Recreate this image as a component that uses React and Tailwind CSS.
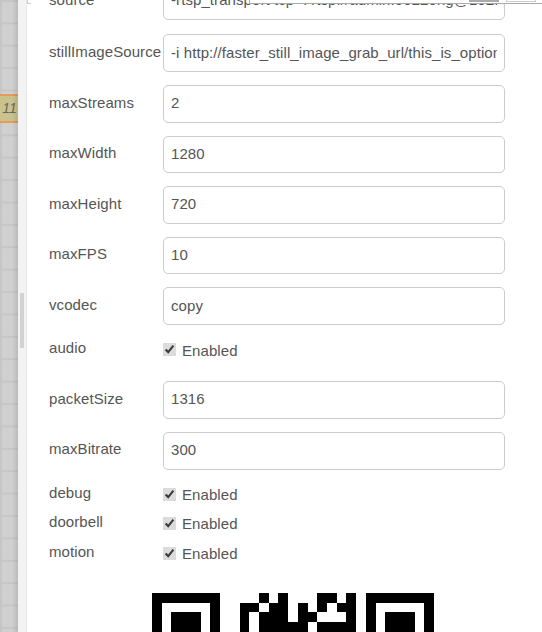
const stream = [
    ['stillImageSource', '-i http://faster_still_image_grab_url/this_is_optional.jpg'],
    ['maxStreams', '2'],
    ['maxWidth', '1280'],
    ['maxHeight', '720'],
    ['maxFPS', '10'],
    ['vcodec', 'copy'],
]

// visible rows of the qr code, [row, first col, last col]
const qrCells = [
    [0, 11, 11], [0, 13, 13], [0, 17, 18], [0, 20, 20],
    [1, 9, 10], [1, 12, 13], [1, 15, 15], [1, 17, 17], [1, 19, 20],
    [2, 9, 9], [2, 11, 13], [2, 15, 16], [2, 20, 20],
    [3, 9, 9], [3, 11, 15], [3, 17, 20],
    [4, 8, 9], [4, 11, 11], [4, 14, 20],
]

const QrCode = () => (
    <svg width="282" height="40" viewBox="0 0 29 4.115" className="block" shapeRendering="crispEdges">
        <rect width="29" height="29" fill="#fff" />
        {[0, 22].map((x) => (
            <g key={x}>
                <rect x={x} width="7" height="1" fill="#000" />
                <rect x={x} width="1" height="7" fill="#000" />
                <rect x={x + 6} width="1" height="7" fill="#000" />
                <rect x={x + 2} y="2" width="3" height="3" fill="#000" />
            </g>
        ))}
        {qrCells.map(([row, from, to]) => (
            <rect key={`${row}-${from}`} x={from} y={row} width={to - from + 1} height="1" fill="#000" />
        ))}
    </svg>
)

const InputRow = ({ label, value, className = 'mb-[13px]' }) => (
    <div className={`flex items-center h-[37.6px] ${className}`}>
        <label className="w-[114px] shrink-0 -mt-[2px] whitespace-nowrap">{label}</label>
        <input
            readOnly
            value={value}
            className="w-[342px] h-[37.6px] px-[7px] pb-[2px] bg-white border border-[#ccc] rounded-[5px] outline-none text-[#555]"
        />
    </div>
)

const CheckRow = ({ label, className = '' }) => (
    <div className={`flex items-center h-[20px] ${className}`}>
        <label className="w-[114px] shrink-0 -mt-[3px]">{label}</label>
        <input readOnly type="checkbox" checked className="w-[13px] h-[13px] m-0 accent-[#dcdcdc]" />
        <span className="ml-[6px] mt-[2px]">Enabled</span>
    </div>
)

export default function App() {
    return (
        <div className="relative flex w-[542px] h-[632px] overflow-hidden bg-white text-[15px] tracking-[0.08px] text-[#555] font-['Liberation_Sans',sans-serif]">
            {/* canvas behind the edit tray */}
            <div className="relative w-[18px] shrink-0 bg-[#d0d0d0] bg-[linear-gradient(to_right,#c6c6c6_2px,transparent_2px),linear-gradient(to_bottom,#c6c6c6_2px,transparent_2px)] bg-[length:22.4px_22.4px]">
                <div className="absolute left-0 top-[94px] w-[18px] h-[29px] bg-[#c9c28c] border-y-2 border-[#e79a5a] flex items-center justify-end pr-[1px] text-[14px] italic text-[#666]">
                    11
                </div>
                <div className="absolute right-0 top-0 w-[6px] h-full bg-gradient-to-r from-transparent to-black/10" />
            </div>

            {/* tray handle */}
            <div className="relative w-[9px] shrink-0 bg-[#f3f3f3] border-r border-[#e8e8e8]">
                <div className="absolute left-[2px] top-[293px] w-[4px] h-[55px] bg-[#d2d2d2]" />
            </div>

            {/* form, scrolled down */}
            <div className="flex-1 pl-[22px]">
                <div className="-mt-[18px]">
                    <InputRow
                        label="source"
                        value="-rtsp_transport tcp -i rtsp://admin:00220ng@192.168.1.50"
                        className="mb-[14.8px]"
                    />
                    {stream.map(([label, value]) => (
                        <InputRow key={label} label={label} value={value} />
                    ))}
                    <CheckRow label="audio" className="mt-[15px] mb-[21px]" />
                    <InputRow label="packetSize" value="1316" className="mb-[13.4px]" />
                    <InputRow label="maxBitrate" value="300" className="mb-[15px]" />
                    <CheckRow label="debug" className="mb-[9px]" />
                    <CheckRow label="doorbell" className="mb-[10px]" />
                    <CheckRow label="motion" />
                    <div className="ml-[103px] mt-[29px]">
                        <QrCode />
                    </div>
                </div>
            </div>

            {/* menu bottom edge hanging over the top of the form */}
            <div className="absolute left-[249px] right-0 top-0 h-[4px] bg-white border-b border-[#aaa] border-l">
                <div className="absolute left-[219px] top-0 w-[30px] h-[2px] bg-[#aaa]" />
                <div className="absolute left-[256px] top-0 w-[30px] h-[2px] border border-t-0 border-[#ccc]" />
            </div>
            <div className="absolute left-[27px] top-0 w-[4px] h-[4px] border-l border-b border-[#ccc] bg-white" />
        </div>
    )
}
